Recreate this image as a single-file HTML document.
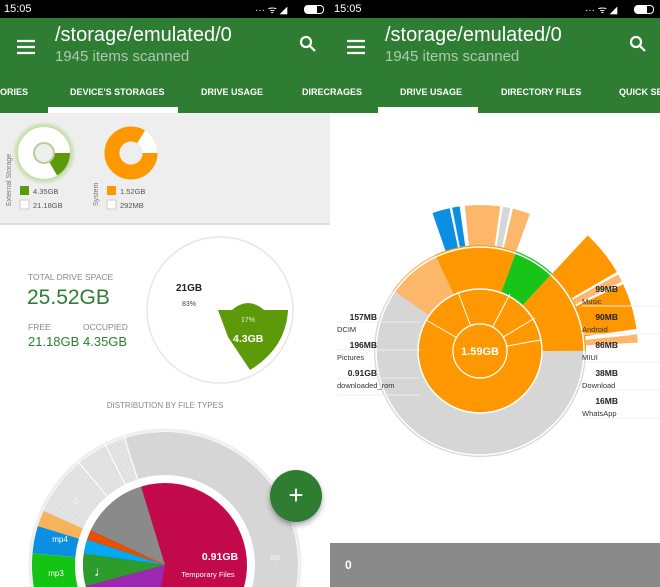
<!DOCTYPE html>
<html><head><meta charset="utf-8"><style>
*{margin:0;padding:0;box-sizing:border-box}
body{width:660px;height:587px;overflow:hidden;background:#fff;font-family:"Liberation Sans",sans-serif;position:relative}
.abs{position:absolute}
.sb{top:0;height:18px;background:#000;color:#fff;font-size:11px}
.bar{top:18px;height:95px;background:#2e7d32}
.t{color:#fff;font-size:20px}
.st{color:rgba(255,255,255,.6);font-size:15px}
.tab{color:#fff;font-size:9px;font-weight:bold;top:87px;white-space:nowrap}
.ind{top:107px;height:6px;background:#fff}
</style></head><body>
<div class="abs sb" style="left:0;width:660px"></div>
<div class="abs" style="left:4px;top:3px;color:#fff;font-size:11px">15:05</div>
<div class="abs" style="left:334px;top:3px;color:#fff;font-size:11px">15:05</div>
<div class="abs" style="left:255px;top:2px;color:#fff;font-size:10px">··· ᯤ ◢</div>
<div class="abs" style="left:304px;top:5px;width:20px;height:9px;border:1.5px solid #fff;border-radius:4px"><div style="width:12px;height:100%;background:#fff"></div></div>
<div class="abs" style="left:585px;top:2px;color:#fff;font-size:10px">··· ᯤ ◢</div>
<div class="abs" style="left:634px;top:5px;width:20px;height:9px;border:1.5px solid #fff;border-radius:4px"><div style="width:12px;height:100%;background:#fff"></div></div>

<div class="abs bar" style="left:0;width:330px"></div>
<div class="abs bar" style="left:330px;width:330px"></div>
<svg class="abs" style="left:0;top:18px" width="660" height="95">
<g stroke="#fff" stroke-width="2.2"><line x1="17" y1="23" x2="35" y2="23"/><line x1="17" y1="29" x2="35" y2="29"/><line x1="17" y1="35" x2="35" y2="35"/>
<line x1="347" y1="23" x2="365" y2="23"/><line x1="347" y1="29" x2="365" y2="29"/><line x1="347" y1="35" x2="365" y2="35"/>
<circle cx="306" cy="24" r="5" fill="none"/><line x1="310" y1="28" x2="315" y2="33"/>
<circle cx="636" cy="24" r="5" fill="none"/><line x1="640" y1="28" x2="645" y2="33"/></g>
</svg>
<div class="abs t" style="left:55px;top:24px">/storage/emulated/0</div>
<div class="abs st" style="left:55px;top:48px">1945 items scanned</div>
<div class="abs t" style="left:385px;top:24px">/storage/emulated/0</div>
<div class="abs st" style="left:385px;top:48px">1945 items scanned</div>
<div class="abs tab" style="left:0">ORIES</div>
<div class="abs tab" style="left:70px">DEVICE'S STORAGES</div>
<div class="abs tab" style="left:201px">DRIVE USAGE</div>
<div class="abs tab" style="left:302px">DIREC</div>
<div class="abs tab" style="left:330px">RAGES</div>
<div class="abs tab" style="left:400px">DRIVE USAGE</div>
<div class="abs tab" style="left:501px">DIRECTORY FILES</div>
<div class="abs tab" style="left:619px">QUICK SE</div>
<div class="abs ind" style="left:48px;width:130px"></div>
<div class="abs ind" style="left:378px;width:100px"></div>

<div class="abs" style="left:0;top:113px;width:330px;height:112px;background:#eeeeee;border-bottom:2px solid #ddd"></div>
<svg class="abs" style="left:0;top:113px" width="330" height="112">
<defs><radialGradient id="gl"><stop offset="80%" stop-color="#8bc34a" stop-opacity=".5"/><stop offset="100%" stop-color="#8bc34a" stop-opacity="0"/></radialGradient></defs>
<circle cx="44" cy="40" r="32" fill="url(#gl)"/>
<circle cx="44" cy="40" r="18" fill="none" stroke="#fff" stroke-width="16"/>
<circle cx="44" cy="40" r="18" fill="none" stroke="#5d9a0a" stroke-width="16" pathLength="360" stroke-dasharray="60 360"/>
<circle cx="44" cy="40" r="10" fill="#eeeeee" stroke="#b5cf8f" stroke-width="2"/>
<circle cx="131" cy="40" r="19" fill="none" stroke="#ff9800" stroke-width="15"/>
<circle cx="131" cy="40" r="19" fill="none" stroke="#fff" stroke-width="15" pathLength="360" stroke-dasharray="58 360" transform="rotate(-58 131 40)"/>
<circle cx="131" cy="40" r="11.5" fill="#eeeeee"/>
<rect x="20" y="73" width="9" height="9" fill="#5d9a0a"/><rect x="20" y="87" width="9" height="9" fill="#fff" stroke="#ccc"/>
<rect x="107" y="73" width="9" height="9" fill="#ff9800"/><rect x="107" y="87" width="9" height="9" fill="#fff" stroke="#ccc"/>
<text x="33" y="81" font-size="7.5" fill="#555">4.35GB</text><text x="33" y="95" font-size="7.5" fill="#555">21.18GB</text>
<text x="120" y="81" font-size="7.5" fill="#555">1.52GB</text><text x="120" y="95" font-size="7.5" fill="#555">292MB</text>
<text transform="translate(11 93) rotate(-90)" font-size="7" fill="#777">External Storage</text>
<text transform="translate(98 93) rotate(-90)" font-size="7" fill="#777">System</text>
</svg>

<div class="abs" style="left:28px;top:272px;font-size:8.5px;color:#888">TOTAL DRIVE SPACE</div>
<div class="abs" style="left:27px;top:286px;font-size:21px;color:#2e7d32">25.52GB</div>
<div class="abs" style="left:28px;top:322px;font-size:8.5px;color:#888">FREE</div>
<div class="abs" style="left:83px;top:322px;font-size:8.5px;color:#888">OCCUPIED</div>
<div class="abs" style="left:28px;top:334px;font-size:13px;color:#2e7d32">21.18GB</div>
<div class="abs" style="left:83px;top:334px;font-size:13px;color:#2e7d32">4.35GB</div>
<svg class="abs" style="left:0;top:230px" width="330" height="357">
<circle cx="220" cy="80" r="73" fill="#fff" stroke="#e6e6e6" stroke-width="1.5"/>
<path d="M218 80 L232 80 Q248 66 264 80 L288 80 Q286 118 250 140 L228 107 Z" fill="#5d9a0a"/>
<text x="176" y="61" font-size="10" font-weight="bold" fill="#222">21GB</text>
<text x="182" y="76" font-size="7" fill="#444">83%</text>
<text x="241" y="92" font-size="7" fill="#e6f0d6">17%</text>
<text x="233" y="112" font-size="10.5" font-weight="bold" fill="#fff">4.3GB</text>
<text x="165" y="178" font-size="8" fill="#888" text-anchor="middle">DISTRIBUTION BY FILE TYPES</text>
<defs><pattern id="hp" width="3" height="3" patternUnits="userSpaceOnUse"><rect width="3" height="3" fill="#e4e4e4"/><rect width="1" height="1" fill="#cfcfcf"/></pattern></defs>
<circle cx="165" cy="335" r="135" fill="none" stroke="#efefef" stroke-width="3"/>
<g fill="none" stroke-width="43">
<circle cx="165" cy="335" r="111.5" stroke="#d6d6d6"/>
<circle cx="165" cy="335" r="111.5" stroke="url(#hp)" pathLength="360" stroke-dasharray="49 360" transform="rotate(204 165 335)"/>
<circle cx="165" cy="335" r="111.5" stroke="#f6b35a" pathLength="360" stroke-dasharray="7 360" transform="rotate(197 165 335)"/>
<circle cx="165" cy="335" r="111.5" stroke="#0a8fe3" pathLength="360" stroke-dasharray="12 360" transform="rotate(185 165 335)"/>
<circle cx="165" cy="335" r="111.5" stroke="#14c414" pathLength="360" stroke-dasharray="35 360" transform="rotate(150 165 335)"/>
</g>
<g stroke="#fff" stroke-width="1"><line x1="165" y1="335" x2="75" y2="228"/><line x1="165" y1="335" x2="103" y2="210"/><line x1="165" y1="335" x2="123" y2="204"/></g>
<circle cx="165" cy="335" r="86" fill="#fff"/>
<g fill="none" stroke-width="82">
<circle cx="165" cy="335" r="41" stroke="#c2094a"/>
<circle cx="165" cy="335" r="41" stroke="#8a8a8a" pathLength="360" stroke-dasharray="48 360" transform="rotate(205 165 335)"/>
<circle cx="165" cy="335" r="41" stroke="#e65100" pathLength="360" stroke-dasharray="7 360" transform="rotate(198 165 335)"/>
<circle cx="165" cy="335" r="41" stroke="#03a9f4" pathLength="360" stroke-dasharray="10 360" transform="rotate(188 165 335)"/>
<circle cx="165" cy="335" r="41" stroke="#2c9c2c" pathLength="360" stroke-dasharray="23 360" transform="rotate(165 165 335)"/>
<circle cx="165" cy="335" r="41" stroke="#9c27b0" pathLength="360" stroke-dasharray="65 360" transform="rotate(100 165 335)"/>
</g>
<text x="220" y="330" font-size="10.5" font-weight="bold" fill="#fff" text-anchor="middle">0.91GB</text>
<text x="208" y="347" font-size="7.5" fill="#fff" text-anchor="middle">Temporary Files</text>
<text x="60" y="312" font-size="8" fill="#fff" text-anchor="middle">mp4</text>
<text x="56" y="346" font-size="8" fill="#fff" text-anchor="middle">mp3</text>
<text x="275" y="330" font-size="8" fill="#f4f4f4" text-anchor="middle">zip</text>
<text x="76" y="274" font-size="8" fill="#f4f4f4" text-anchor="middle">0</text>
<text x="101" y="346" font-size="14" font-weight="bold" fill="#fff" text-anchor="middle">♩</text>
</svg>
<div class="abs" style="left:270px;top:470px;width:52px;height:52px;border-radius:50%;background:#2e7d32;box-shadow:0 3px 6px rgba(0,0,0,.35);color:#fff;font-size:26px;line-height:50px;text-align:center">+</div>

<svg class="abs" style="left:330px;top:113px" width="330" height="430">
<g transform="translate(-330 -113)" fill="none">
<g stroke-width="44">
<circle cx="480" cy="351" r="84" stroke="#d6d6d6"/>
<circle cx="480" cy="351" r="84" stroke="#fdb76a" pathLength="360" stroke-dasharray="30 360" transform="rotate(215 480 351)"/>
<circle cx="480" cy="351" r="84" stroke="#ff9800" pathLength="360" stroke-dasharray="45 360" transform="rotate(245 480 351)"/>
<circle cx="480" cy="351" r="84" stroke="#19c419" pathLength="360" stroke-dasharray="23 360" transform="rotate(290 480 351)"/>
<circle cx="480" cy="351" r="84" stroke="#ff9800" pathLength="360" stroke-dasharray="47 360" transform="rotate(313 480 351)"/>
</g>
<g stroke-width="40">
<circle cx="480" cy="351" r="126" stroke="#0a8fe3" pathLength="360" stroke-dasharray="7 360" transform="rotate(251 480 351)"/>
<circle cx="480" cy="351" r="126" stroke="#0a8fe3" pathLength="360" stroke-dasharray="3 360" transform="rotate(259 480 351)"/>
<circle cx="480" cy="351" r="126" stroke="#fdb76a" pathLength="360" stroke-dasharray="14 360" transform="rotate(264 480 351)"/>
<circle cx="480" cy="351" r="126" stroke="#d6d6d6" pathLength="360" stroke-dasharray="3 360" transform="rotate(279 480 351)"/>
<circle cx="480" cy="351" r="126" stroke="#fdb76a" pathLength="360" stroke-dasharray="7 360" transform="rotate(283 480 351)"/>
</g>
<g stroke-width="52">
<circle cx="480" cy="351" r="132" stroke="#ff9800" pathLength="360" stroke-dasharray="17 360" transform="rotate(313 480 351)"/>
<circle cx="480" cy="351" r="132" stroke="#fdb76a" pathLength="360" stroke-dasharray="3 360" transform="rotate(331 480 351)"/>
<circle cx="480" cy="351" r="132" stroke="#ff9800" pathLength="360" stroke-dasharray="17 360" transform="rotate(335 480 351)"/>
<circle cx="480" cy="351" r="132" stroke="#fdb76a" pathLength="360" stroke-dasharray="3 360" transform="rotate(354 480 351)"/>
</g>
<circle cx="480" cy="351" r="62" fill="#ff9800"/>
<circle cx="480" cy="351" r="62" stroke="#fff" stroke-width="1.5"/>
<circle cx="480" cy="351" r="104" stroke="#fff" stroke-width="1.5"/>
<circle cx="480" cy="351" r="27" stroke="#fff" stroke-width="1.2"/>
<g stroke="#fff" stroke-width="1"><line x1="480" y1="351" x2="426" y2="320"/><line x1="480" y1="351" x2="458" y2="292"/><line x1="480" y1="351" x2="510" y2="294"/><line x1="480" y1="351" x2="535" y2="318"/><line x1="480" y1="351" x2="540" y2="340"/></g>
<circle cx="480" cy="351" r="27" fill="#ff9800" stroke="#fff" stroke-width="1.2"/>
<g stroke="#ececec" stroke-width="1">
<line x1="337" y1="322" x2="420" y2="322"/><line x1="337" y1="350" x2="420" y2="350"/><line x1="337" y1="378" x2="420" y2="378"/><line x1="337" y1="395" x2="420" y2="395"/>
<line x1="582" y1="306" x2="660" y2="306"/><line x1="582" y1="334" x2="660" y2="334"/><line x1="582" y1="362" x2="660" y2="362"/><line x1="582" y1="390" x2="660" y2="390"/><line x1="582" y1="418" x2="660" y2="418"/>
</g>
</g>
<g font-family="Liberation Sans,sans-serif" transform="translate(-330 -113)">
<text x="377" y="320" font-size="8.5" font-weight="bold" fill="#222" text-anchor="end">157MB</text><text x="337" y="332" font-size="7.5" fill="#333">DCIM</text>
<text x="377" y="348" font-size="8.5" font-weight="bold" fill="#222" text-anchor="end">196MB</text><text x="337" y="360" font-size="7.5" fill="#333">Pictures</text>
<text x="377" y="376" font-size="8.5" font-weight="bold" fill="#222" text-anchor="end">0.91GB</text><text x="337" y="388" font-size="7.5" fill="#333">downloaded_rom</text>
<text x="618" y="292" font-size="8.5" font-weight="bold" fill="#222" text-anchor="end">99MB</text><text x="582" y="304" font-size="7.5" fill="#333">Music</text>
<text x="618" y="320" font-size="8.5" font-weight="bold" fill="#222" text-anchor="end">90MB</text><text x="582" y="332" font-size="7.5" fill="#333">Android</text>
<text x="618" y="348" font-size="8.5" font-weight="bold" fill="#222" text-anchor="end">86MB</text><text x="582" y="360" font-size="7.5" fill="#333">MIUI</text>
<text x="618" y="376" font-size="8.5" font-weight="bold" fill="#222" text-anchor="end">38MB</text><text x="582" y="388" font-size="7.5" fill="#333">Download</text>
<text x="618" y="404" font-size="8.5" font-weight="bold" fill="#222" text-anchor="end">16MB</text><text x="582" y="416" font-size="7.5" fill="#333">WhatsApp</text>
<text x="480" y="355" font-size="11" font-weight="bold" fill="#fff" text-anchor="middle">1.59GB</text>
</g>
</svg>
<div class="abs" style="left:330px;top:543px;width:330px;height:44px;background:#8a8a8a"></div>
<div class="abs" style="left:345px;top:558px;color:#fff;font-size:12px;font-weight:bold">0</div>
</body></html>
